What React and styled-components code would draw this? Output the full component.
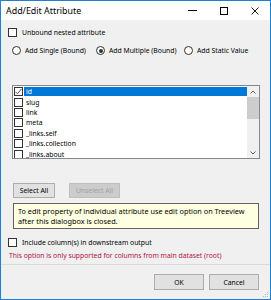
import styled, { createGlobalStyle } from 'styled-components';

const GlobalStyle = createGlobalStyle`
  html, body {
    margin: 0;
    padding: 0;
    background: #ffffff;
  }
  * {
    box-sizing: border-box;
  }
`;

const Window = styled.div`
  position: relative;
  width: 271px;
  height: 300px;
  border: 1px solid #1f7fd3;
  display: flex;
  flex-direction: column;
  font-family: "Noto Sans", "Open Sans", sans-serif;
  font-size: 6.8px;
  color: #000;
  overflow: hidden;
`;

const TitleBar = styled.div`
  height: 19px;
  background: #fff;
  display: flex;
  align-items: center;
  padding-left: 5px;
`;

const Title = styled.div`
  flex: 1;
  font-size: 8.9px;
  color: #000;
`;

const Controls = styled.div`
  display: flex;
  height: 100%;
`;

const ControlButton = styled.div`
  width: 31px;
  height: 100%;
  display: flex;
  align-items: center;
  justify-content: center;
`;

const Body = styled.div`
  flex: 1;
  background: #f0f0f0;
  display: flex;
  flex-direction: column;
  padding: 0 0 0 7px;
`;

const CheckRow = styled.label`
  display: flex;
  align-items: center;
  height: 9px;
  margin-top: ${({ $top }) => $top}px;
  gap: 5px;
  white-space: nowrap;
`;

const Box = styled.span`
  width: 9px;
  height: 9px;
  flex: none;
  background: #fff;
  border: 1px solid #333;
  display: flex;
  align-items: center;
  justify-content: center;
`;

const RadioRow = styled.div`
  display: flex;
  align-items: center;
  height: 9px;
  margin: 9px 0 0 4px;
`;

const RadioItem = styled.label`
  display: flex;
  align-items: center;
  gap: 4px;
  width: ${({ $w }) => $w}px;
  white-space: nowrap;
`;

const Radio = styled.span`
  width: 9px;
  height: 9px;
  flex: none;
  border-radius: 50%;
  border: 1px solid #333;
  background: #fff;
  display: flex;
  align-items: center;
  justify-content: center;

  &::after {
    content: '';
    width: 4px;
    height: 4px;
    border-radius: 50%;
    background: ${({ $on }) => ($on ? '#333' : 'transparent')};
  }
`;

const ListBox = styled.div`
  margin: 30px 0 0 4px;
  width: 248px;
  height: 74px;
  border: 1px solid #828790;
  background: #fff;
  display: flex;
  overflow: hidden;
`;

const Items = styled.div`
  flex: 1;
  padding-top: 0.5px;
`;

const Item = styled.div`
  display: flex;
  align-items: center;
  height: 10.4px;
  padding-left: 1px;
`;

const ItemText = styled.span`
  flex: 1;
  height: 9px;
  line-height: 9px;
  margin-left: 1px;
  padding-left: 2px;
  background: ${({ $selected }) => ($selected ? '#0078d7' : 'transparent')};
  color: ${({ $selected }) => ($selected ? '#fff' : '#000')};
`;

const ScrollBar = styled.div`
  width: 12px;
  background: #f0f0f0;
  display: flex;
  flex-direction: column;
  align-items: center;
`;

const Arrow = styled.div`
  height: 11px;
  width: 100%;
  display: flex;
  align-items: center;
  justify-content: center;
`;

const Thumb = styled.div`
  width: 100%;
  height: 22px;
  background: #cdcdcd;
`;

const Track = styled.div`
  flex: 1;
`;

const ButtonRow = styled.div`
  display: flex;
  gap: 14px;
  margin: 24px 0 0 5px;
`;

const Button = styled.div`
  width: ${({ $w }) => $w}px;
  height: ${({ $h }) => $h || 15}px;
  display: flex;
  align-items: center;
  justify-content: center;
  background: ${({ $disabled }) => ($disabled ? '#cccccc' : '#e1e1e1')};
  border: 1px solid ${({ $disabled }) => ($disabled ? '#bfbfbf' : '#adadad')};
  color: ${({ $disabled }) => ($disabled ? '#a0a0a0' : '#000')};
`;

const Note = styled.div`
  margin: 5px 0 0 5px;
  width: 246px;
  height: 26px;
  background: #ffffe1;
  border: 1px solid #646464;
  padding: 2px 4px;
  line-height: 10px;
  font-size: 7.3px;
`;

const Warning = styled.div`
  margin: 4px 0 0 1px;
  height: 10px;
  line-height: 10px;
  color: #b0123d;
`;

const Footer = styled.div`
  height: 35px;
  background: #f0f0f0;
  border-top: 1px solid #dadada;
  display: flex;
  justify-content: flex-end;
  gap: 5px;
  padding: 9px 11px 0 0;
`;

const Grip = styled.svg`
  position: absolute;
  right: 1px;
  bottom: 1px;
`;

const items = ['id', 'slug', 'link', 'meta', '_links.self', '_links.collection', '_links.about'];

const Check = () => (
  <svg width="7" height="7" viewBox="0 0 7 7">
    <path d="M0.5 3.8 L2.5 5.8 L6.5 0.8" fill="none" stroke="#555" strokeWidth="1" />
  </svg>
);

export default function App() {
  return (
    <>
      <GlobalStyle />
      <Window>
        <TitleBar>
          <Title>Add/Edit Attribute</Title>
          <Controls>
            <ControlButton>
              <svg width="9" height="9" viewBox="0 0 9 9">
                <path d="M0 4.5 H9" stroke="#000" strokeWidth="1" />
              </svg>
            </ControlButton>
            <ControlButton>
              <svg width="8" height="8" viewBox="0 0 8 8">
                <rect x="0.5" y="0.5" width="7" height="7" fill="none" stroke="#000" strokeWidth="1" />
              </svg>
            </ControlButton>
            <ControlButton>
              <svg width="8" height="8" viewBox="0 0 8 8">
                <path d="M0.5 0.5 L7.5 7.5 M7.5 0.5 L0.5 7.5" stroke="#000" strokeWidth="0.9" />
              </svg>
            </ControlButton>
          </Controls>
        </TitleBar>
        <Body>
          <CheckRow $top={8}>
            <Box />
            Unbound nested attribute
          </CheckRow>
          <RadioRow>
            <RadioItem $w={84}>
              <Radio />
              Add Single (Bound)
            </RadioItem>
            <RadioItem $w={88}>
              <Radio $on />
              Add Multiple (Bound)
            </RadioItem>
            <RadioItem $w={70}>
              <Radio />
              Add Static Value
            </RadioItem>
          </RadioRow>
          <ListBox>
            <Items>
              {items.map((name, i) => (
                <Item key={name}>
                  <Box>{i === 0 && <Check />}</Box>
                  <ItemText $selected={i === 0}>{name}</ItemText>
                </Item>
              ))}
            </Items>
            <ScrollBar>
              <Arrow>
                <svg width="6" height="4" viewBox="0 0 6 4">
                  <path d="M0.5 3.5 L3 1 L5.5 3.5" fill="none" stroke="#606060" strokeWidth="1" />
                </svg>
              </Arrow>
              <Thumb />
              <Track />
              <Arrow>
                <svg width="6" height="4" viewBox="0 0 6 4">
                  <path d="M0.5 0.5 L3 3 L5.5 0.5" fill="none" stroke="#606060" strokeWidth="1" />
                </svg>
              </Arrow>
            </ScrollBar>
          </ListBox>
          <ButtonRow>
            <Button $w={42}>Select All</Button>
            <Button $w={51} $disabled>Unselect All</Button>
          </ButtonRow>
          <Note>
            To edit property of individual attribute use edit option on Treeview after
            this dialogbox is closed.
          </Note>
          <CheckRow $top={9}>
            <Box />
            Include column(s) in downstream output
          </CheckRow>
          <Warning>This option is only supported for columns from main dataset (root)</Warning>
        </Body>
        <Footer>
          <Button $w={50} $h={16}>OK</Button>
          <Button $w={50} $h={16}>Cancel</Button>
        </Footer>
        <Grip width="6" height="6" viewBox="0 0 6 6">
          <rect x="4" y="0" width="1" height="1" fill="#b8b8b8" />
          <rect x="2" y="2" width="1" height="1" fill="#b8b8b8" />
          <rect x="4" y="2" width="1" height="1" fill="#b8b8b8" />
          <rect x="0" y="4" width="1" height="1" fill="#b8b8b8" />
          <rect x="2" y="4" width="1" height="1" fill="#b8b8b8" />
          <rect x="4" y="4" width="1" height="1" fill="#b8b8b8" />
        </Grip>
      </Window>
    </>
  );
}
